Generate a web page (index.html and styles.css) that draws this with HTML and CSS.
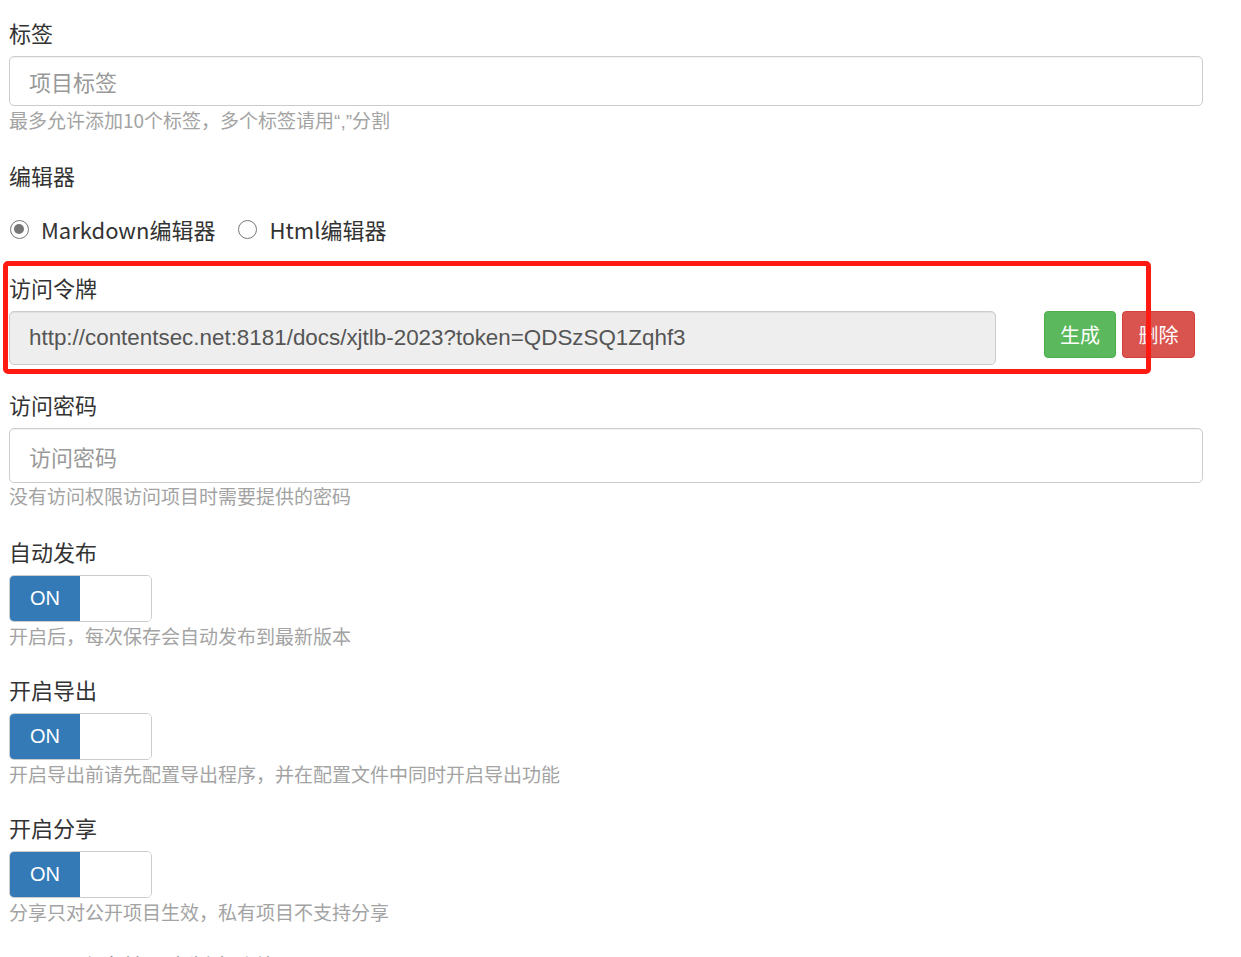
FILE: index.html
```html
<!DOCTYPE html>
<html lang="zh-CN">
<head>
<meta charset="utf-8">
<title>项目设置</title>
<link rel="stylesheet" href="styles.css">
</head>
<body>
<form class="form">
  <div class="group g-tags">
    <label class="label">标签</label>
    <div class="input input-50"><span class="placeholder">项目标签</span></div>
    <div class="help">最多允许添加10个标签，多个标签请用<span class="quote">“,”</span>分割</div>
  </div>

  <div class="group g-editor">
    <label class="label">编辑器</label>
    <div class="radios">
      <span class="radio checked"></span><span class="radio-text">Markdown编辑器</span>
      <span class="radio second"></span><span class="radio-text">Html编辑器</span>
    </div>
  </div>

  <div class="group g-token">
    <label class="label">访问令牌</label>
    <div class="token-row">
      <div class="input token-input"><span class="token-text">http://contentsec.net:8181/docs/xjtlb-2023?token=QDSzSQ1Zqhf3</span></div>
      <button type="button" class="btn btn-success">生成</button>
      <button type="button" class="btn btn-danger">删除</button>
    </div>
    <div class="highlight"></div>
  </div>

  <div class="group g-pass">
    <label class="label">访问密码</label>
    <div class="input input-54"><span class="placeholder">访问密码</span></div>
    <div class="help">没有访问权限访问项目时需要提供的密码</div>
  </div>

  <div class="group g-switch">
    <label class="label">自动发布</label>
    <div class="switch"><span class="switch-on">ON</span><span class="switch-off"></span></div>
    <div class="help help-switch">开启后，每次保存会自动发布到最新版本</div>
  </div>

  <div class="group g-switch">
    <label class="label">开启导出</label>
    <div class="switch"><span class="switch-on">ON</span><span class="switch-off"></span></div>
    <div class="help help-switch">开启导出前请先配置导出程序，并在配置文件中同时开启导出功能</div>
  </div>

  <div class="group g-switch">
    <label class="label">开启分享</label>
    <div class="switch"><span class="switch-on">ON</span><span class="switch-off"></span></div>
    <div class="help help-switch">分享只对公开项目生效，私有项目不支持分享</div>
  </div>

  <div class="group g-last">
    <label class="label label-indent">开启文档历史版本功能</label>
  </div>
</form>
</body>
</html>
```

FILE: styles.css
```css
html, body {
  margin: 0;
  padding: 0;
  background: #fff;
  overflow: hidden;
  height: 957px;
}

body {
  font-family: "Noto Sans CJK SC", "Liberation Sans", sans-serif;
  color: #333;
}

.form {
  padding: 18px 0 0 9px;
  width: 1194px;
}

.group {
  position: relative;
}

.label {
  display: block;
  font-size: 22px;
  line-height: 28px;
  height: 28px;
  margin-bottom: 10px;
  color: #333;
  padding-left: 0;
}

.input {
  box-sizing: border-box;
  border: 1px solid #ccc;
  border-radius: 5px;
  background: #fff;
  display: flex;
  align-items: center;
  padding-left: 19px;
  box-shadow: inset 0 1px 1px rgba(0,0,0,0.06);
}

.input-50 { height: 50px; }
.input-54 { height: 55px; }

.placeholder {
  font-size: 22px;
  color: #999;
}

.help {
  font-size: 19px;
  line-height: 26px;
  color: #a3a3a3;
  margin-top: 1px;
  padding-left: 0;
}

.quote {
  font-family: "Liberation Sans", Arial, sans-serif;
}

.g-tags .help { margin-bottom: 26px; }

.g-editor .radios {
  margin-top: 25px;
  height: 30px;
  display: flex;
  align-items: center;
  margin-bottom: 29px;
}

.radio {
  box-sizing: border-box;
  width: 19px;
  height: 19px;
  border: 1.5px solid #777;
  border-radius: 50%;
  display: inline-block;
  position: relative;
  margin-left: 1px;
  margin-right: 12px;
  flex: none;
}

.radio.checked::after {
  content: "";
  position: absolute;
  left: 3px;
  top: 3px;
  width: 10px;
  height: 10px;
  border-radius: 50%;
  background: #777;
}

.radio.second { margin-left: 23px; }

.radio-text {
  font-size: 22px;
  color: #333;
  line-height: 30px;
}

.token-row {
  display: flex;
  align-items: flex-start;
}

.token-input {
  width: 987px;
  height: 54px;
  background: #eee;
  flex: none;
}

.token-text {
  font-family: "Liberation Sans", Arial, sans-serif;
  font-size: 22.4px;
  color: #555;
}

.btn {
  box-sizing: border-box;
  height: 47px;
  border-radius: 4px;
  font-family: "Noto Sans CJK SC", sans-serif;
  font-size: 20px;
  color: #fff;
  padding: 0;
  cursor: pointer;
}

.btn-success {
  width: 72px;
  margin-left: 48px;
  background: #5cb85c;
  border: 1px solid #4cae4c;
}

.btn-danger {
  width: 73px;
  margin-left: 6px;
  background: #d9534f;
  border: 1px solid #d43f3a;
}

.highlight {
  position: absolute;
  left: -6px;
  top: -12px;
  width: 1148px;
  height: 113px;
  box-sizing: border-box;
  border: 5px solid #ff1a12;
  border-radius: 5px;
  pointer-events: none;
}

.g-token { margin-bottom: 25px; }

.g-pass .help {
  margin-top: 0;
  margin-bottom: 28px;
}

.switch {
  box-sizing: border-box;
  width: 143px;
  height: 47px;
  border: 1px solid #ccc;
  border-radius: 5px;
  display: flex;
  overflow: hidden;
}

.switch-on {
  width: 70px;
  background: #337ab7;
  color: #fff;
  font-family: "Liberation Sans", Arial, sans-serif;
  font-size: 20px;
  display: flex;
  align-items: center;
  justify-content: center;
}

.switch-off {
  flex: 1;
  background: #fff;
}

.help-switch {
  margin-top: 1px;
  margin-bottom: 26px;
}

.label-indent {
  padding-left: 48px;
}
```
